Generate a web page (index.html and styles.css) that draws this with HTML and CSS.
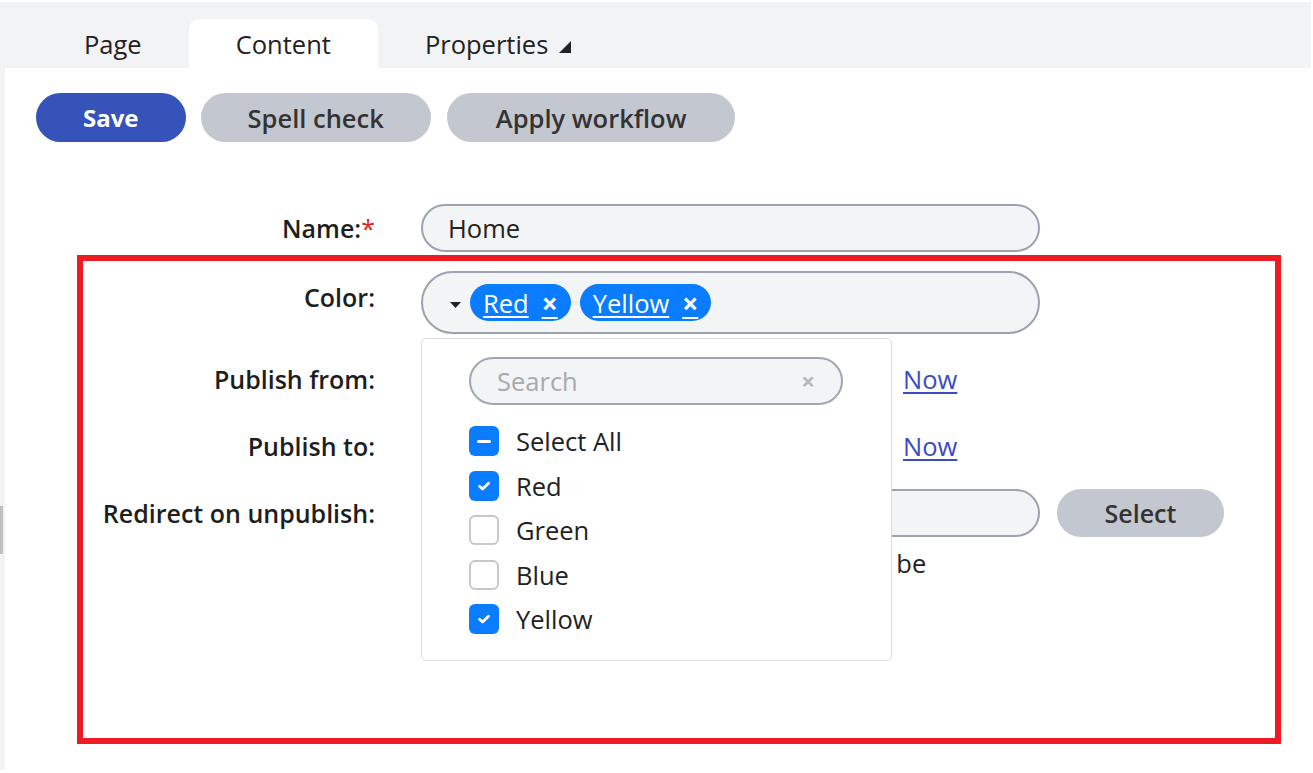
FILE: index.html
```html
<!DOCTYPE html>
<html lang="en">
<head>
<meta charset="utf-8">
<title>Content</title>
<link rel="stylesheet" href="styles.css">
</head>
<body>
<div class="page">
  <div class="tabbar">
    <div class="tab">Page</div>
    <div class="tab active">Content</div>
    <div class="tab">Properties
      <svg class="tri" width="12" height="12" viewBox="0 0 12 12"><polygon points="12,0 12,12 0,12" fill="#222"/></svg>
    </div>
  </div>
  <div class="body">
    <div class="rail"><div class="rail-thumb"></div></div>
    <div class="content">
      <div class="toolbar">
        <button class="btn primary">Save</button>
        <button class="btn">Spell check</button>
        <button class="btn apply">Apply workflow</button>
      </div>

      <div class="row-name">
        <div class="label">Name:<span class="req">*</span></div>
        <div class="input"><span class="val">Home</span></div>
      </div>

      <div class="highlight">
        <div class="hl-row row-color">
          <div class="label label-color">Color:</div>
          <div class="field-multi">
            <div class="multi">
              <svg class="caret" width="11" height="6" viewBox="0 0 11 6"><polygon points="0,0 11,0 5.5,6" fill="#222"/></svg>
              <span class="tag"><a class="tag-text" href="#">Red</a><a class="tag-x" href="#">×</a></span>
              <span class="tag"><a class="tag-text" href="#">Yellow</a><a class="tag-x" href="#">×</a></span>
            </div>
            <div class="dropdown">
              <div class="search">
                <span class="ph">Search</span>
                <span class="search-x">×</span>
              </div>
              <div class="opts">
                <div class="opt"><span class="cb on"><span class="dash"></span></span>Select All</div>
                <div class="opt"><span class="cb on"><svg width="16" height="16" viewBox="0 0 16 16"><path d="M3.5 8.3 L6.6 11 L12.5 5.2" fill="none" stroke="#fff" stroke-width="2.8" stroke-linecap="round" stroke-linejoin="round"/></svg></span>Red</div>
                <div class="opt"><span class="cb off"></span>Green</div>
                <div class="opt"><span class="cb off"></span>Blue</div>
                <div class="opt"><span class="cb on"><svg width="16" height="16" viewBox="0 0 16 16"><path d="M3.5 8.3 L6.6 11 L12.5 5.2" fill="none" stroke="#fff" stroke-width="2.8" stroke-linecap="round" stroke-linejoin="round"/></svg></span>Yellow</div>
              </div>
            </div>
          </div>
        </div>

        <div class="hl-row row-std">
          <div class="label">Publish from:</div>
          <div class="field-date"><div class="input date"></div><a class="now" href="#">Now</a></div>
        </div>

        <div class="hl-row row-std">
          <div class="label">Publish to:</div>
          <div class="field-date"><div class="input date"></div><a class="now" href="#">Now</a></div>
        </div>

        <div class="hl-row row-std">
          <div class="label">Redirect on unpublish:</div>
          <div class="field-redirect"><div class="input redirect"></div><button class="btn select">Select</button></div>
        </div>

        <div class="hl-row row-help">
          <div></div>
          <div class="help">When set, visitors opening the page will be</div>
        </div>
      </div>
    </div>
  </div>
</div>
</body>
</html>
```

FILE: styles.css
```css
* { box-sizing: border-box; }

body {
  margin: 0;
  background: #fff;
  font-family: "Open Sans", "Noto Sans", sans-serif;
  color: #222;
}

.page {
  width: 1311px;
  padding-top: 2px;
}

/* tabs */
.tabbar {
  background: #f2f3f5;
  height: 66px;
  display: flex;
  align-items: flex-end;
  padding-left: 37px;
}

.tab {
  height: 49px;
  padding: 1px 47px 0;
  display: flex;
  align-items: center;
  font-size: 25.5px;
  color: #222;
  border-radius: 10px 10px 0 0;
}

.tab.active { background: #fff; }

.tri { margin-left: 11px; margin-top: 6px; }

/* body */
.body { display: flex; }

.rail {
  width: 5px;
  height: 702px;
  background: #f2f3f5;
  padding-top: 438px;
}

.rail-thumb {
  width: 3px;
  height: 48px;
  background: #bfbfbf;
}

.content {
  flex: 1;
  padding-top: 25px;
}

.toolbar {
  display: flex;
  gap: 15px;
  margin-left: 31px;
}

.btn {
  height: 49px;
  border: none;
  border-radius: 25px;
  padding: 0 47px;
  font-family: inherit;
  font-size: 25.5px;
  font-weight: 600;
  background: #c3c7cf;
  color: #333;
}

.btn.primary {
  background: #3553b8;
  color: #fff;
  font-weight: 700;
  font-size: 24px;
}

.btn.apply { padding: 0 49px; margin-left: 1px; }

/* form */
.label {
  text-align: right;
  line-height: 48px;
  font-size: 25px;
  font-weight: 600;
  color: #1e1e1e;
  white-space: nowrap;
}

.req { color: #e2231a; font-weight: 400; }

.row-name {
  display: grid;
  grid-template-columns: 370px 619px;
  column-gap: 46px;
  margin-top: 62px;
}

.input {
  height: 48px;
  border: 2px solid #9ca3ae;
  border-radius: 24px;
  background: #f3f4f6;
  display: flex;
  align-items: center;
  padding-left: 25px;
  font-size: 25.5px;
  color: #222;
}

.highlight {
  margin-left: 72px;
  margin-top: 3px;
  width: 1204px;
  height: 489px;
  border: 6px solid #ed1c24;
  padding-top: 10px;
}

.hl-row {
  display: grid;
  grid-template-columns: 292px auto;
  column-gap: 46px;
}

.label-color { padding-top: 2px; }

.field-multi { position: relative; width: 619px; }

.multi {
  height: 63px;
  border: 2px solid #9ca3ae;
  border-radius: 32px;
  background: #f3f4f6;
  display: flex;
  align-items: center;
  padding-left: 27px;
  gap: 9px;
}

.caret { margin-top: 5px; margin-right: 0; }

.tag {
  height: 37px;
  border-radius: 19px;
  background: #0a7cff;
  display: inline-flex;
  align-items: center;
  padding: 0 13px;
  gap: 13px;
  font-size: 25.5px;
}

.tag a {
  color: #fff;
  text-decoration: underline;
  text-decoration-thickness: 1.5px;
  text-underline-offset: 3px;
}

.tag-x { font-size: 28px; font-weight: 700; line-height: 1; }

.dropdown {
  position: absolute;
  top: 67px;
  left: 0;
  width: 471px;
  height: 323px;
  background: #fff;
  border: 1px solid #dadcdf;
  border-radius: 5px;
  padding: 18px 0 0 47px;
  z-index: 5;
}

.search {
  width: 374px;
  height: 48px;
  border: 2px solid #a0a7b2;
  border-radius: 24px;
  background: #f3f4f6;
  display: flex;
  align-items: center;
  justify-content: space-between;
  padding: 0 26px 0 26px;
  font-size: 25.5px;
}

.ph { color: #a9a9a9; }

.search-x { color: #b7b7b7; font-size: 24px; font-weight: 700; line-height: 1; }

.opts { margin-top: 14px; }

.opt {
  height: 44.5px;
  display: flex;
  align-items: center;
  gap: 17px;
  font-size: 25.5px;
  color: #222;
}

.cb {
  width: 30px;
  height: 30px;
  border-radius: 6px;
  display: flex;
  align-items: center;
  justify-content: center;
  flex: none;
}

.cb.on { background: #0a7cff; }

.cb.off { border: 2px solid #c5c8cd; background: #fff; }

.dash {
  width: 14px;
  height: 3px;
  border-radius: 2px;
  background: #fff;
}

.row-std { margin-top: 19px; }
.row-color + .row-std { margin-top: 21px; }

.field-date { display: flex; align-items: center; }

.input.date { width: 464px; }

.now {
  margin-left: 18px;
  font-size: 25.5px;
  color: #3b4bc4;
  text-decoration: underline;
  text-decoration-thickness: 1.5px;
  text-underline-offset: 3px;
}

.field-redirect { display: flex; gap: 17px; }

.input.redirect { width: 619px; }

.btn.select {
  width: 167px;
  height: 48px;
  padding: 0;
  font-size: 25px;
}

.row-help { margin-top: 11px; }

.help {
  font-size: 25.5px;
  line-height: 30px;
  color: #222;
  white-space: nowrap;
}
```
